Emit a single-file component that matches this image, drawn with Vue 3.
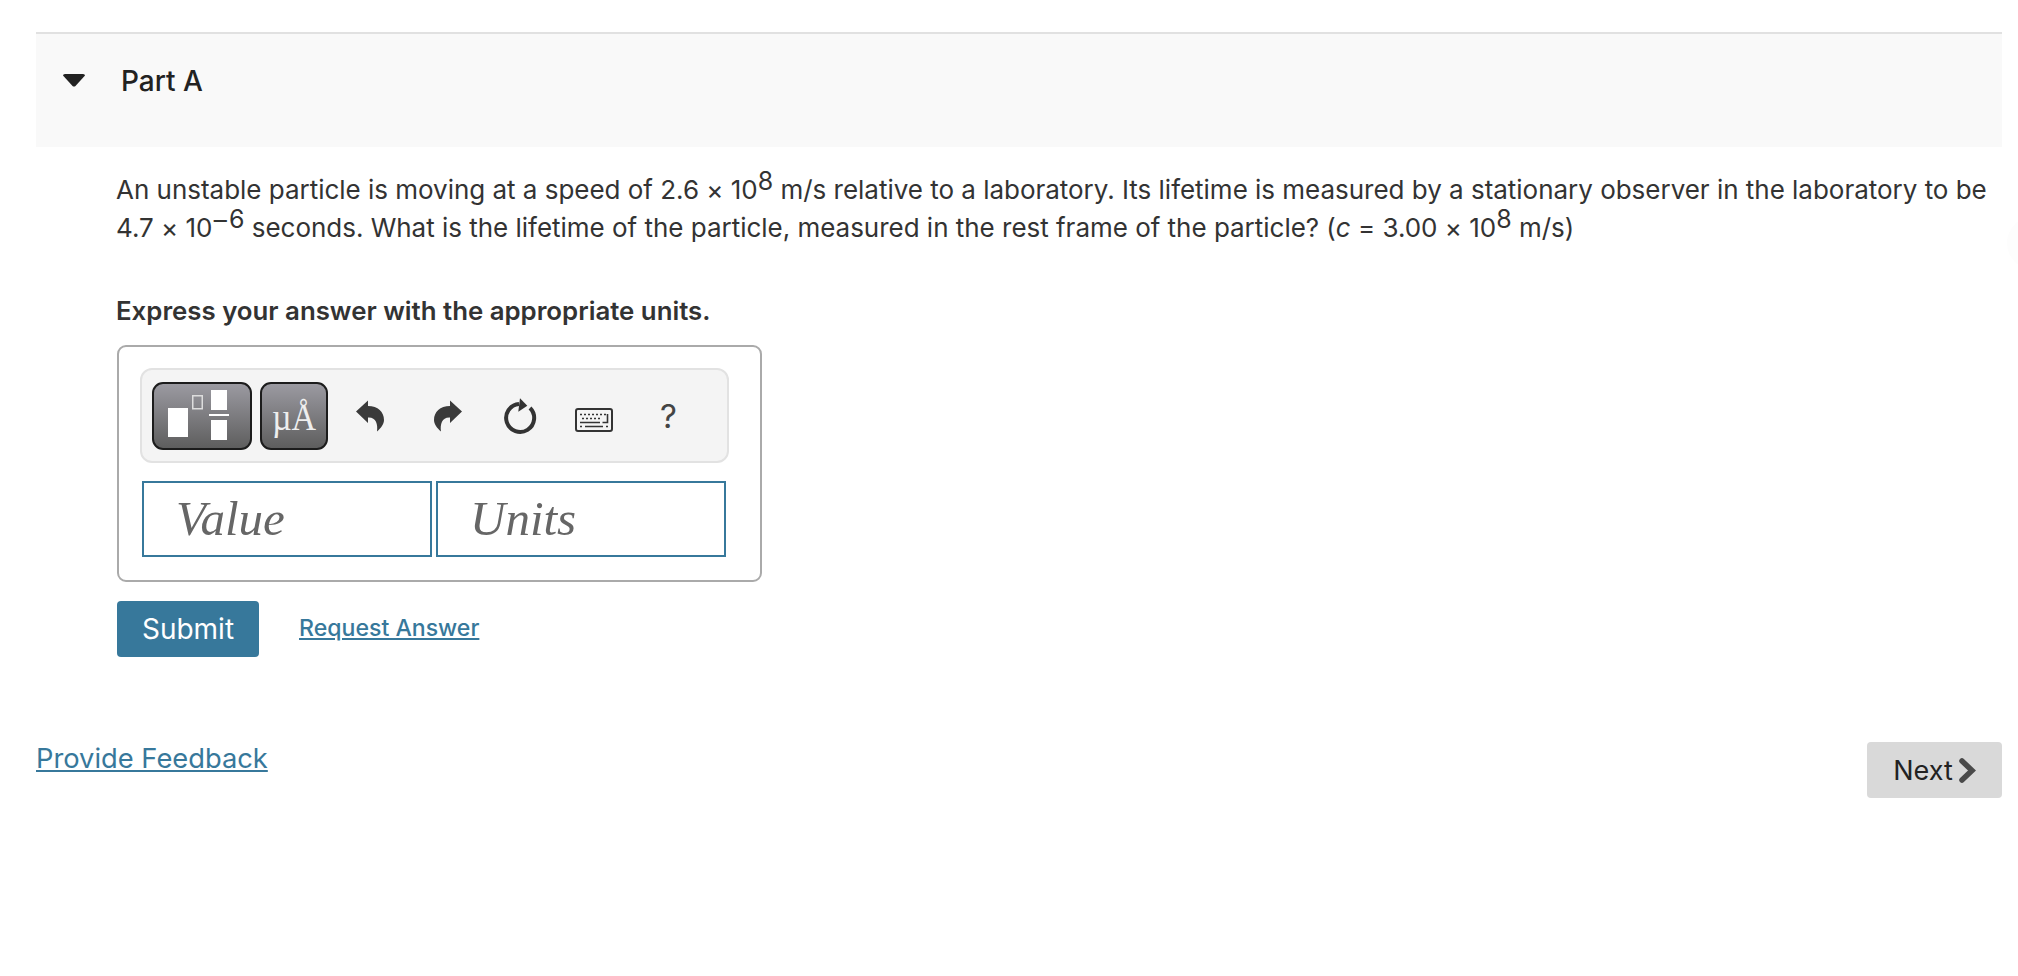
<script setup>
</script>

<template>
  <div class="page">
    <div class="part-head">
      <svg class="caret" width="22" height="13" viewBox="0 0 22 13"><path d="M0 1.500 Q0 0 2 0 H20 Q22 0 22 1.500 L12.500 12 Q11 13 9.500 12 Z" fill="#222"/></svg>
      <h2 class="part-title">Part A</h2>
    </div>
    <div class="content">
      <p class="question">An unstable particle is moving at a speed of 2.6 × 10<sup>8</sup> m/s relative to a laboratory. Its lifetime is measured by a stationary observer in the laboratory to be<br>4.7 × 10<sup><span class="minus">−</span>6</sup> seconds. What is the lifetime of the particle, measured in the rest frame of the particle? (<i>c</i> = 3.00 × 10<sup>8</sup> m/s)</p>
      <p class="instruction">Express your answer with the appropriate units.</p>
      <div class="answer-box">
        <div class="toolbar">
          <button class="tool tool-wide" aria-label="Templates">
            <svg width="100" height="68" viewBox="0 0 100 68">
              <rect x="16" y="26" width="20" height="29" fill="#fff"/>
              <rect x="40.750" y="13.750" width="9.500" height="13" fill="none" stroke="#ddd" stroke-width="1.500"/>
              <rect x="59" y="8" width="16" height="20" fill="#fff"/>
              <rect x="57" y="32" width="20" height="2" fill="#fff"/>
              <rect x="59" y="38" width="16" height="20" fill="#fff"/>
            </svg>
          </button>
          <button class="tool tool-unit" aria-label="Units"><span class="unit-text">µÅ</span></button>
          <svg class="ico ico-undo" width="28" height="32" viewBox="0 0 28 32"><path d="M0 11.500 L12 0.500 V6 C22 6 28 12 28 20 C28 24 25 28 21 31.500 C22 24 20 17 12 17.500 V23 Z" fill="#3a3a3a"/></svg>
          <svg class="ico ico-redo" width="28" height="32" viewBox="0 0 28 32"><path d="M28 11.500 L16 0.500 V6 C6 6 0 12 0 20 C0 24 3 28 7 31.500 C6 24 8 17 16 17.500 V23 Z" fill="#3a3a3a"/></svg>
          <svg class="ico ico-reset" width="34" height="38" viewBox="0 0 34 38"><path d="M16 7 A14 14 0 1 0 27 11" fill="none" stroke="#333" stroke-width="4"/><path d="M17 1.300 L24.300 8.700 L15.300 14.700 Z" fill="#333"/></svg>
          <svg class="ico ico-keys" width="38" height="24" viewBox="0 0 38 24">
            <rect x="1" y="1" width="36" height="22" rx="2" fill="none" stroke="#333" stroke-width="2"/>
            <path d="M5 6.500h2M9 6.500h2M13 6.500h2M17 6.500h2M21 6.500h2M25 6.500h2M29 6.500h2M7 10.500h2M11 10.500h2M15 10.500h2M19 10.500h2M23 10.500h2M32.500 6v8.500h-5M5 14.500h20M5 18.500h2M10 18.500h18M31 18.500h2" stroke="#333" stroke-width="1.600" fill="none"/>
          </svg>
          <span class="help">?</span>
        </div>
        <div class="inputs">
          <div class="field">Value</div>
          <div class="field">Units</div>
        </div>
      </div>
      <div class="actions">
        <button class="submit">Submit</button>
        <a class="request" href="#">Request Answer</a>
      </div>
    </div>
    <div class="footer">
      <a class="feedback" href="#">Provide Feedback</a>
      <button class="next">Next
        <svg width="17" height="25" viewBox="0 0 17 25"><path d="M3 3 L13 12.500 L3 22" fill="none" stroke="#4a4a4a" stroke-width="5.500" stroke-linecap="round"/></svg>
      </button>
    </div>
    <div class="edge-tab"></div>
  </div>
</template>

<style scoped>
.page {
  position: relative;
  width: 2018px;
  height: 976px;
  box-sizing: border-box;
  padding: 32px 16px 0 36px;
  font-family: Inter, "Liberation Sans", Arial, sans-serif;
  color: #333;
  overflow: hidden;
}
.edge-tab {
  position: absolute;
  left: 2007px;
  top: 215px;
  width: 60px;
  height: 56px;
  border-radius: 50%;
  background: #fdfdfd;
}
.part-head {
  height: 115px;
  box-sizing: border-box;
  border-top: 2px solid #e1e1e1;
  background: #f9f9f9;
  display: flex;
  align-items: flex-start;
  padding: 40px 0 0 27px;
}
.part-title {
  margin: -11px 0 0 36px;
  font-size: 28px;
  line-height: 36px;
  font-weight: 500;
  color: #222;
}
.content { padding: 24px 0 0 81px; }
.question {
  margin: 0 0 0 -1px;
  font-size: 26px;
  line-height: 38px;
  letter-spacing: -0.02px;
  white-space: nowrap;
}
.question sup {
  font-size: 25px;
  line-height: 0;
  vertical-align: baseline;
  position: relative;
  top: -9px;
}
.minus { display: inline-block; transform: scaleX(1.15); }
.instruction {
  margin: 45px 0 0 -1px;
  font-size: 25.800px;
  line-height: 38px;
  font-weight: 600;
}
.answer-box {
  margin: 15px 0 0;
  width: 645px;
  height: 237px;
  box-sizing: border-box;
  border: 2px solid #aaa;
  border-radius: 9px;
  padding: 21px 0 0 21px;
}
.toolbar {
  width: 589px;
  height: 95px;
  box-sizing: border-box;
  background: #f4f4f4;
  border: 2px solid #e2e2e2;
  border-radius: 12px;
  display: flex;
  align-items: center;
  padding: 0 0 0 10px;
}
.tool {
  height: 68px;
  box-sizing: border-box;
  padding: 0;
  border: 2px solid #1c1c1c;
  border-radius: 11px;
  background: linear-gradient(#9b9aa1, #5e5e5e);
  color: #fff;
  display: flex;
  align-items: center;
  justify-content: center;
}
.tool svg { margin: -2px; flex: none; }
.tool-wide { width: 100px; }
.tool-unit {
  width: 68px;
  margin-left: 8px;
  font-family: "Liberation Serif", serif;
  font-size: 34px;
  padding-top: 6px;
  color: #eee;
}
.unit-text {
  display: inline-block;
  transform: scaleY(1.14);
  transform-origin: 50% 78%;
}
.ico { flex: none; }
.ico-undo { margin-left: 28px; }
.ico-redo { margin-left: 50px; }
.ico-reset { margin-left: 41px; }
.ico-keys { margin-left: 38px; margin-top: 9px; }
.help {
  margin-left: 47px;
  font-size: 33px;
  line-height: 40px;
  color: #444;
}
.inputs {
  display: flex;
  gap: 4px;
  margin: 18px 0 0 2px;
}
.field {
  width: 290px;
  height: 76px;
  box-sizing: border-box;
  border: 2px solid #37789b;
  padding-left: 32px;
  font-family: "Liberation Serif", serif;
  font-style: italic;
  font-size: 49px;
  line-height: 72px;
  color: #666;
}
.actions {
  margin-top: 19px;
  display: flex;
  align-items: center;
}
.submit {
  width: 142px;
  height: 56px;
  margin: 0;
  padding: 0;
  border: 0;
  border-radius: 4px;
  background: #37789b;
  color: #fff;
  font-family: inherit;
  font-size: 28px;
}
.request {
  margin-left: 40px;
  margin-top: -2px;
  font-size: 23.100px;
  font-weight: 500;
  color: #37789b;
}
.footer {
  display: flex;
  justify-content: space-between;
  align-items: flex-start;
  margin-top: 85px;
}
.feedback {
  font-size: 27.300px;
  line-height: 34px;
  color: #37789b;
}
.next {
  width: 135px;
  height: 56px;
  padding: 0;
  border: 0;
  border-radius: 4px;
  background: #d9d9d9;
  color: #222;
  font-family: inherit;
  font-size: 27px;
  display: flex;
  align-items: center;
  justify-content: center;
  gap: 6px;
}
</style>
